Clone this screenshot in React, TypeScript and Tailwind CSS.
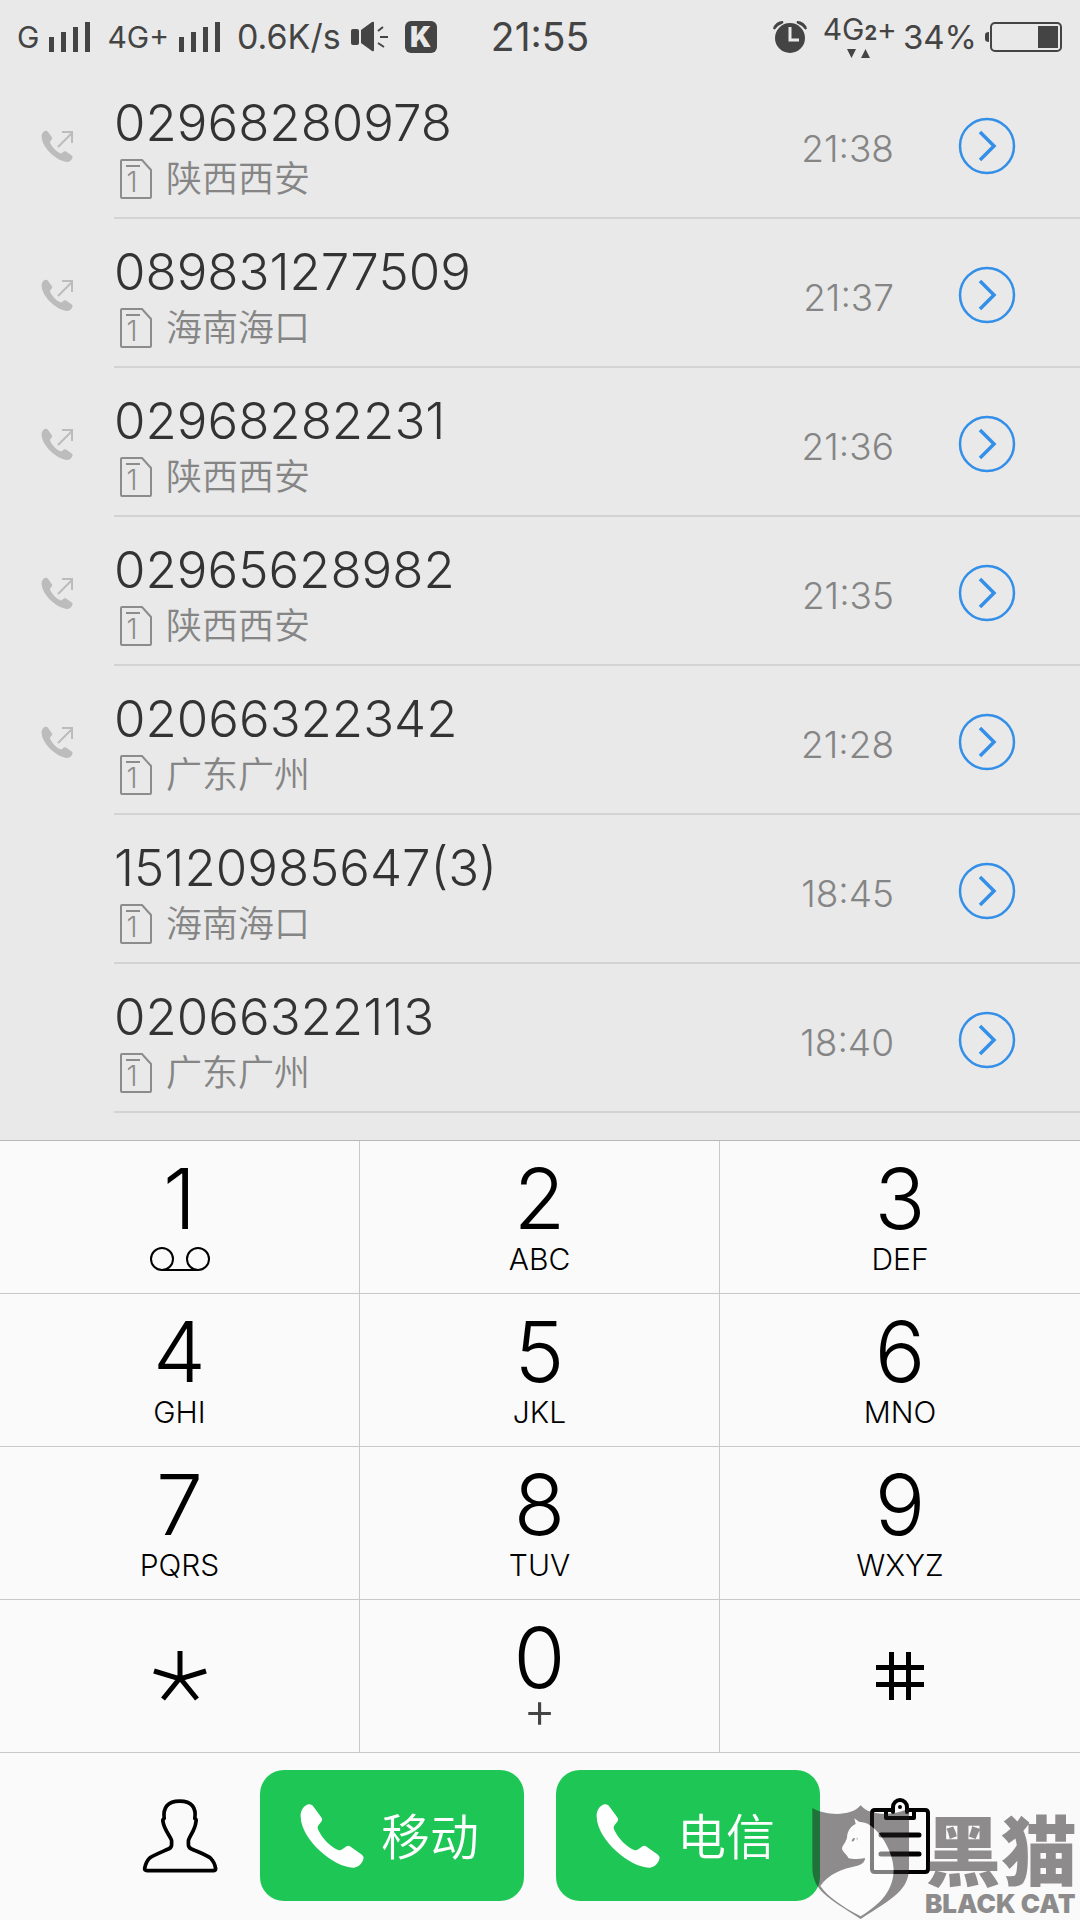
import type { ReactNode } from "react";

interface Call {
  number: string;
  place: string;
  time: string;
  outgoing: boolean;
}

const CALLS: Call[] = [
  { number: "02968280978", place: "陕西西安", time: "21:38", outgoing: true },
  { number: "089831277509", place: "海南海口", time: "21:37", outgoing: true },
  { number: "02968282231", place: "陕西西安", time: "21:36", outgoing: true },
  { number: "02965628982", place: "陕西西安", time: "21:35", outgoing: true },
  { number: "02066322342", place: "广东广州", time: "21:28", outgoing: true },
  { number: "15120985647(3)", place: "海南海口", time: "18:45", outgoing: false },
  { number: "02066322113", place: "广东广州", time: "18:40", outgoing: false },
];

const KEYS = [
  { digit: "1", letters: "" },
  { digit: "2", letters: "ABC" },
  { digit: "3", letters: "DEF" },
  { digit: "4", letters: "GHI" },
  { digit: "5", letters: "JKL" },
  { digit: "6", letters: "MNO" },
  { digit: "7", letters: "PQRS" },
  { digit: "8", letters: "TUV" },
  { digit: "9", letters: "WXYZ" },
  { digit: "*", letters: "" },
  { digit: "0", letters: "+" },
  { digit: "#", letters: "" },
];

const HANDSET =
  "M598 200C596 182 608 164 622 162C628 161 633 164 637 170L661 203Q664 208 660 213L650 226Q647 231 650 237C662 264 688 290 712 299Q717 300 721 297L735 287Q741 284 746 288L780 312Q787 317 785 326C781 340 768 351 755 351C700 352 600 270 598 200Z";

function SignalBars() {
  return (
    <svg width="42" height="30" viewBox="0 0 42 30" fill="currentColor" aria-hidden="true">
      <rect x="0" y="15" width="5" height="15" />
      <rect x="12" y="10" width="5" height="20" />
      <rect x="24" y="5" width="5" height="25" />
      <rect x="36" y="0" width="5" height="30" />
    </svg>
  );
}

function SpeakerIcon() {
  return (
    <svg width="38" height="32" viewBox="0 0 38 32" fill="currentColor" aria-hidden="true">
      <rect x="0" y="8" width="8" height="16" rx="2" />
      <path d="M10 9L21 1Q23 0 23 2V29Q23 31 21 30L10 22Z" />
      <path d="M27 10L32 6M29 16H37M27 22L33 26" stroke="currentColor" strokeWidth="2" />
    </svg>
  );
}

function AlarmIcon() {
  return (
    <svg width="34" height="34" viewBox="0 0 34 34" aria-hidden="true">
      <circle cx="17" cy="18" r="15" fill="currentColor" />
      <path d="M1 9A9 9 0 0 1 10 2A20 20 0 0 0 1 9Z" fill="currentColor" stroke="currentColor" strokeWidth="2" />
      <path d="M33 9A9 9 0 0 0 24 2A20 20 0 0 1 33 9Z" fill="currentColor" stroke="currentColor" strokeWidth="2" />
      <path d="M17 7V20H26" fill="none" stroke="#e9e9e9" strokeWidth="3" />
    </svg>
  );
}

function BatteryIcon() {
  return (
    <svg width="78" height="30" viewBox="0 0 78 30" aria-hidden="true">
      <path d="M4 10V20Q0 20 0 17V13Q0 10 4 10Z" fill="currentColor" />
      <rect x="6" y="1" width="70" height="28" rx="4" fill="none" stroke="currentColor" strokeWidth="2" />
      <rect x="53" y="4" width="20" height="22" fill="currentColor" />
    </svg>
  );
}

function StatusBar() {
  return (
    <header className="grid grid-cols-[1fr_auto_1fr] items-center px-[17px] pt-[15px] pb-[11px] font-normal text-[#444]">
      <div className="flex items-center">
        <span className="text-[30px] leading-8">G</span>
        <span className="ml-[10px]">
          <SignalBars />
        </span>
        <span className="ml-4 text-[30px] leading-8">4G+</span>
        <span className="ml-[10px]">
          <SignalBars />
        </span>
        <span className="ml-4 text-[34px] leading-10">0.6K/s</span>
        <span className="ml-[10px]">
          <SpeakerIcon />
        </span>
        <span className="ml-4 flex size-8 items-center justify-center rounded-md bg-[#444] text-[28px] leading-8 font-black text-[#e9e9e9]">
          K
        </span>
      </div>
      <time className="text-[39px] leading-10">21:55</time>
      <div className="flex items-center justify-end">
        <AlarmIcon />
        <span className="relative ml-4 pb-3 text-[30px] leading-7">
          4G<b className="text-[20px] font-bold">2</b>+
          <svg className="absolute bottom-0 left-6" width="24" height="10" viewBox="0 0 24 10" fill="currentColor" aria-hidden="true">
            <path d="M0 0H9L4.500 9ZM14 9H23L18.500 0Z" />
          </svg>
        </span>
        <span className="mr-2 ml-[6px] text-[33px] leading-10">34%</span>
        <BatteryIcon />
      </div>
    </header>
  );
}

function OutgoingIcon() {
  return (
    <svg width="34" height="34" viewBox="0 0 34 34" className="text-[#bcbcbc]" role="img" aria-label="呼出">
      <path d={HANDSET} fill="currentColor" transform="translate(-98 -26) scale(.165)" />
      <path d="M17 17L31 3M21 2H31V13" fill="none" stroke="currentColor" strokeWidth="2" />
    </svg>
  );
}

function SimIcon() {
  return (
    <svg width="32" height="40" viewBox="0 0 32 40" className="text-[#8c8c8c]" aria-hidden="true">
      <path d="M1 2Q1 1 2 1H22L31 11V38Q31 39 30 39H2Q1 39 1 38ZM6 7H20" fill="none" stroke="currentColor" strokeWidth="2" />
      <text x="12" y="33" textAnchor="middle" fontSize="28" fontWeight="300" fill="currentColor">
        1
      </text>
    </svg>
  );
}

function CallRow({ call }: { call: Call }) {
  return (
    <li className="flex items-stretch">
      <div className="flex w-[114px] shrink-0 items-center pt-[5px] pl-[41px]">{call.outgoing && <OutgoingIcon />}</div>
      <div className="flex flex-1 items-center border-b-2 border-[#d3d3d3] pt-[23px] pb-3 pr-16">
        <div className="flex-1">
          <p className="text-[51px] leading-[60px] text-[#333]">{call.number}</p>
          <p className="flex items-center gap-[14px] pl-[6px] text-[36px] leading-[52px] font-[350] text-[#858585]">
            <SimIcon />
            {call.place}
          </p>
        </div>
        <time className="text-[37px] leading-[56px] text-[#858585]">{call.time}</time>
        <button type="button" aria-label={`${call.number} 详情`} className="ml-16 rounded-full pb-[6px] text-[#338fe8]">
          <svg width="58" height="58" viewBox="0 0 58 58" fill="none" stroke="currentColor">
            <circle cx="29" cy="29" r="27" strokeWidth="2.5" />
            <path d="M22 15L36 29L22 43" strokeWidth="3.5" />
          </svg>
        </button>
      </div>
    </li>
  );
}

function VoicemailIcon() {
  return (
    <svg width="62" height="24" viewBox="0 0 62 24" fill="none" stroke="currentColor" strokeWidth="2">
      <circle cx="13" cy="12" r="11" />
      <circle cx="49" cy="12" r="11" />
      <path d="M13 23H49" />
    </svg>
  );
}

function StarIcon() {
  return (
    <svg width="54" height="50" viewBox="0 0 54 50" fill="none" stroke="currentColor" strokeWidth="5">
      <path d="M27 0V27M1 20L27 28L53 20M27 27L10 48M27 27L44 48" />
    </svg>
  );
}

function HashIcon() {
  return (
    <svg width="48" height="48" viewBox="0 0 48 48" fill="none" stroke="currentColor" strokeWidth="5">
      <path d="M15.500 0V48M32.500 0V48M0 15.500H48M0 32.500H48" />
    </svg>
  );
}

function DialKey({ digit, letters }: { digit: string; letters: string }) {
  let content: ReactNode;
  if (digit === "*") {
    content = <StarIcon />;
  } else if (digit === "#") {
    content = <HashIcon />;
  } else {
    content = (
      <>
        <span className="text-[84px] leading-[84px]">{digit}</span>
        <span
          className={
            letters === "+"
              ? "flex h-9 items-start text-[50px] leading-5 text-[#444]"
              : "flex h-9 items-center text-[30px] leading-9"
          }
        >
          {digit === "1" ? <VoicemailIcon /> : letters}
        </span>
      </>
    );
  }
  return (
    <button
      type="button"
      aria-label={digit}
      className="flex flex-col items-center justify-center border-r border-b border-[#c9c9c9] py-4 nth-[3n]:border-r-0"
    >
      {content}
    </button>
  );
}

function CallButton({ label }: { label: string }) {
  return (
    <button
      type="button"
      className="flex h-[131px] w-[264px] items-center gap-4 rounded-3xl bg-[#1ec656] pl-[38px] text-[49px] font-[350] text-white"
    >
      <svg width="67" height="67" viewBox="590 155 200 200" fill="currentColor" aria-hidden="true">
        <path d={HANDSET} />
      </svg>
      <span className="pt-1">{label}</span>
    </button>
  );
}

function ContactsIcon() {
  return (
    <svg width="76" height="76" viewBox="124 147 226 226" fill="none" stroke="currentColor" strokeWidth="11" strokeLinejoin="round">
      <path d="M190 208C186 176 200 156 236 156C272 156 286 176 281 208Q287 210 284 220C282 242 264 262 262 274V286Q262 294 270 298C292 308 316 316 328 326C338 336 342 350 343 357Q343 363 336 363H139Q131 363 132 356C134 346 136 336 146 326C160 316 182 308 204 298Q212 294 212 286V274C210 262 190 242 187 220Q184 211 190 208Z" />
    </svg>
  );
}

function ClipboardIcon() {
  return (
    <svg width="60" height="76" viewBox="0 0 60 76" fill="none" stroke="currentColor" strokeWidth="4" strokeLinejoin="round" strokeLinecap="round">
      <path d="M23 12H5Q2 12 2 15V71Q2 74 5 74H55Q58 74 58 71V15Q58 12 55 12H37" />
      <path d="M16 14V20H44V14M23 14V9A7 7 0 0 1 37 9V14" />
      <circle cx="30" cy="9" r="1" strokeWidth="2" />
      <path d="M11 37H49M11 56H49" strokeWidth="5" />
    </svg>
  );
}

function Watermark() {
  return (
    <div className="pointer-events-none absolute right-0 bottom-0 flex items-end text-[#231f20] opacity-50">
      <svg width="100" height="117" viewBox="60 69 300 351" aria-hidden="true">
        <path
          d="M64 84C100 106 180 112 209 76C238 112 318 106 354 84V262C354 330 310 352 209 417C108 352 64 330 64 262Z"
          fill="currentColor"
        />
        <path
          d="M190 115L204 125L222 128C262 142 306 210 308 268C308 330 270 372 209 409C150 378 108 348 88 318C112 282 156 266 196 258C212 254 222 246 222 234C204 238 184 238 172 234C168 222 156 218 153 206C154 196 166 186 168 172C170 148 182 138 194 132Z"
          fill="#fff"
        />
        <path d="M182 184Q184 172 192 174Q190 186 182 184ZM197 172Q202 176 198 182Z" fill="currentColor" />
      </svg>
      <div className="flex flex-col pb-[2px] pl-[14px] pr-[3px]">
        <span className="text-[76px] leading-[76px] font-black">黑猫</span>
        <span className="text-[26px] leading-7 font-black">BLACK CAT</span>
      </div>
    </div>
  );
}

export default function App() {
  return (
    <div className="relative flex min-h-screen flex-col overflow-hidden bg-[#e9e9e9] font-['Inter','Noto_Sans_CJK_SC',sans-serif] font-light">
      <StatusBar />
      <main>
        <ul>
          {CALLS.map((call) => (
            <CallRow key={call.number} call={call} />
          ))}
        </ul>
      </main>
      <section className="mt-auto border-t border-[#b8b8b8] bg-[#fafafa] text-black">
        <div className="grid grid-cols-3">
          {KEYS.map((key) => (
            <DialKey key={key.digit} digit={key.digit} letters={key.letters} />
          ))}
        </div>
        <div className="flex items-center justify-center gap-10 pt-[17px] pb-[19px]">
          <button type="button" aria-label="联系人" className="flex w-20 justify-center">
            <ContactsIcon />
          </button>
          <div className="flex gap-8">
            <CallButton label="移动" />
            <CallButton label="电信" />
          </div>
          <button type="button" aria-label="剪贴板" className="flex w-20 justify-center">
            <ClipboardIcon />
          </button>
        </div>
      </section>
      <Watermark />
    </div>
  );
}
